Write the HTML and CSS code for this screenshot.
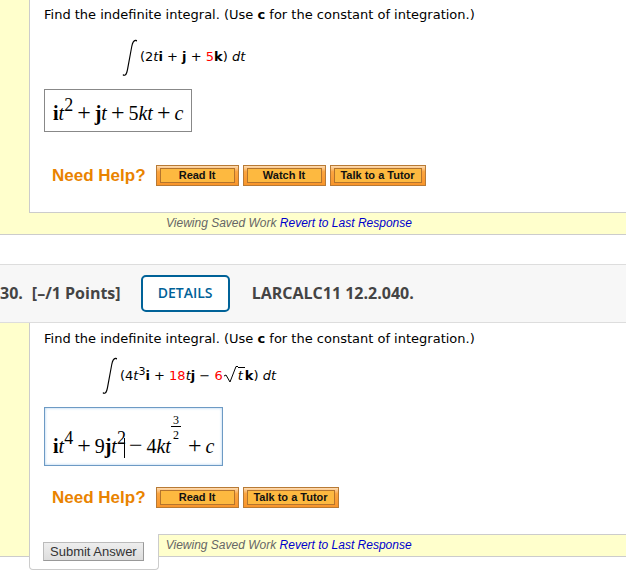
FILE: index.html
```
<!DOCTYPE html>
<html lang="en">
<head>
  <meta charset="UTF-8">
  <title>Assignment</title>
  <link rel="stylesheet" href="styles.css">
</head>
<body>
  <form class="question first">
    <div class="content">
      <p class="prompt">Find the indefinite integral. (Use <b>c</b> for the constant of integration.)</p>
      <div class="integral">
        <svg width="17" height="38" viewBox="0 0 17 38" aria-hidden="true">
          <path d="M15 1.2 C12 -0.3 10.3 2 9.3 7 L5.2 29 C4.3 34 3.2 36.4 1 36.2 C4.3 38 5.2 35 6.2 30 L10.2 8 C11.2 3 12.8 1 15 1.8 Z"/>
          <circle cx="14.3" cy="1.8" r="0.8"/>
          <circle cx="1.5" cy="36" r="0.8"/>
        </svg>
        <span>(2<i>t</i><b>i</b> + <b>j</b> + <span class="red">5</span><b>k</b>) <i>dt</i></span>
      </div>
      <div class="answer" role="textbox" tabindex="0" aria-label="Answer 29">
        <b>i</b><i>t</i><sup>2</sup><span class="op">+</span><b>j</b><i>t</i><span class="op">+</span>5<i>kt</i><span class="op">+</span><i>c</i>
      </div>
      <div class="help">
        <span class="help-title">Need Help?</span>
        <button type="button" class="help-btn"><span>Read It</span></button>
        <button type="button" class="help-btn"><span>Watch It</span></button>
        <button type="button" class="help-btn wide"><span>Talk to a Tutor</span></button>
      </div>
    </div>
    <div class="footer">
      <p class="status">Viewing Saved Work <a href="#">Revert to Last Response</a></p>
    </div>
  </form>

  <div class="header">
    <span class="number">30.</span>
    <span class="points">[–/1 Points]</span>
    <button type="button" class="details">DETAILS</button>
    <span class="name">LARCALC11 12.2.040.</span>
  </div>

  <form class="question second">
    <div class="content">
      <p class="prompt">Find the indefinite integral. (Use <b>c</b> for the constant of integration.)</p>
      <div class="integral">
        <svg width="17" height="38" viewBox="0 0 17 38" aria-hidden="true">
          <path d="M15 1.2 C12 -0.3 10.3 2 9.3 7 L5.2 29 C4.3 34 3.2 36.4 1 36.2 C4.3 38 5.2 35 6.2 30 L10.2 8 C11.2 3 12.8 1 15 1.8 Z"/>
          <circle cx="14.3" cy="1.8" r="0.8"/>
          <circle cx="1.5" cy="36" r="0.8"/>
        </svg>
        <span>(4<i>t</i><sup>3</sup><b>i</b> + <span class="red">18</span><i>t</i><b>j</b> − <span class="red">6</span><svg class="root" width="15" height="17" viewBox="0 0 15 17" aria-hidden="true"><path d="M1 10 L3 9 L7 16 L13 0.5 H15"/></svg><span class="radicand"><i>t</i></span><b>k</b>) <i>dt</i></span>
      </div>
      <div class="answer focus" role="textbox" tabindex="0" aria-label="Answer 30">
        <b>i</b><i>t</i><sup>4</sup><span class="op">+</span>9<b>j</b><i>t</i><sup>2</sup><span class="cursor"></span><span class="op">−</span>4<i>kt</i><span class="frac"><span>3</span><span>2</span></span><span class="op">+</span><i>c</i>
      </div>
      <div class="help">
        <span class="help-title">Need Help?</span>
        <button type="button" class="help-btn"><span>Read It</span></button>
        <button type="button" class="help-btn wide"><span>Talk to a Tutor</span></button>
      </div>
    </div>
    <div class="footer">
      <div class="submit-tab"><button type="submit" class="submit">Submit Answer</button></div>
      <p class="status">Viewing Saved Work <a href="#">Revert to Last Response</a></p>
    </div>
  </form>
</body>
</html>
```
FILE: styles.css
```
body {
  margin: 0;
  padding-bottom: 17px;
  background: #fff;
  color: #000;
  font-family: Verdana, "DejaVu Sans", sans-serif;
  font-size: 13px;
}
p {
  margin: 0;
}
.question {
  background: #ffffcc;
  border-bottom: 1px solid #ccc;
}
.content {
  margin-left: 29px;
  padding: 8px 14px 26px;
  background: #fff;
  border-left: 1px solid #ccc;
  border-bottom: 1px solid #ccc;
}
.first .content {
  padding-top: 7px;
}
.prompt {
  line-height: 16px;
}

/* integral line */
.integral {
  display: flex;
  align-items: center;
  gap: 1px;
  height: 38px;
  margin: 16px 0 12px 78px;
  line-height: 16px;
  white-space: nowrap;
}
.second .integral {
  margin: 10px 0 12px 58px;
}
.integral > span {
  padding-bottom: 2px;
}
.integral sup {
  font-size: 11px;
  line-height: 0;
}
.red {
  color: #f00;
}
.root {
  vertical-align: -3px;
  fill: none;
  stroke: #000;
}
.radicand {
  display: inline-block;
  line-height: 15px;
  padding-right: 2px;
  border-top: 1px solid #000;
}

/* answer box */
.answer {
  display: flex;
  align-items: baseline;
  box-sizing: border-box;
  width: fit-content;
  height: 43px;
  padding: 12px 8px 0;
  border: 1px solid #888;
  font-family: "Liberation Serif", serif;
  font-size: 20px;
  line-height: 23px;
}
.answer sup {
  position: relative;
  top: -9px;
  font-size: 18px;
  line-height: 1;
  vertical-align: baseline;
}
.answer .op {
  margin: 0 4px;
  font-size: 24px;
  line-height: 0;
}
.focus {
  height: 59px;
  padding-top: 27px;
  border-color: #6d9ac4;
  box-shadow: inset 0 0 3px #a8cdee;
}
.cursor {
  align-self: flex-end;
  width: 1px;
  height: 20px;
  margin: 0 0 7px -2px;
  background: #000;
}
.frac {
  display: flex;
  flex-direction: column;
  align-self: flex-start;
  width: 10px;
  margin: -21px 3px 0 0;
  font-size: 12px;
  line-height: 12px;
  text-align: center;
}
.frac span + span {
  padding-top: 2px;
  border-top: 1px solid #000;
}

/* help buttons */
.help {
  display: flex;
  align-items: center;
  gap: 4px;
  margin: 33px 0 0 8px;
  font-family: "Liberation Sans", Arial, sans-serif;
  font-weight: bold;
}
.second .help {
  margin-top: 21px;
}
.help-title {
  margin-right: 6px;
  color: #e98300;
  font-size: 17px;
  line-height: 21px;
}
.help-btn {
  width: 83px;
  height: 21px;
  padding: 2px 3px;
  border: 1px solid #b87a35;
  background: linear-gradient(#fddcb5, #fba540 30%, #f9952a);
  font: bold 11px/13px "Liberation Sans", Arial, sans-serif;
  color: #111;
}
.help-btn span {
  display: block;
  border: 1px solid #b4742d;
  background: #fdb940;
}
.help-btn.wide {
  width: 96px;
}

/* footer */
.footer {
  display: flex;
  align-items: flex-start;
  height: 21px;
}
.status {
  margin-left: 166px;
  color: #666;
  font: italic 12px/20px "Liberation Sans", Arial, sans-serif;
}
.status a {
  color: #00c;
  text-decoration: none;
}
.submit-tab {
  box-sizing: border-box;
  height: 36px;
  margin: -1px 0 0 29px;
  padding: 8px 14px 0 13px;
  background: #fff;
  border: 1px solid #ccc;
  border-top: 0;
  border-radius: 0 0 4px 4px;
}
.submit-tab + .status {
  margin-left: 7px;
}
.submit {
  height: 19px;
  padding: 0 6px;
  border: 1px solid #bbb;
  border-right-color: #999;
  border-bottom-color: #999;
  background: linear-gradient(#eee, #ddd);
  color: #333;
  font: 13px/17px "Liberation Sans", Arial, sans-serif;
}

/* question header */
.header {
  display: flex;
  align-items: center;
  height: 57px;
  margin-top: 29px;
  border-top: 1px solid #ddd;
  border-bottom: 1px solid #ddd;
  background: #f7f7f7;
  color: #444;
  font: bold 16px/20px "Open Sans", sans-serif;
}
.header span {
  padding-bottom: 2px;
}
.header .points {
  margin: 0 20px 0 9px;
}
.details {
  width: 89px;
  height: 37px;
  margin-right: 22px;
  padding: 0 0 2px;
  border: 2px solid #006298;
  border-radius: 5px;
  background: #fff;
  color: #006298;
  font: 600 14px/20px "Open Sans", sans-serif;
}
```
